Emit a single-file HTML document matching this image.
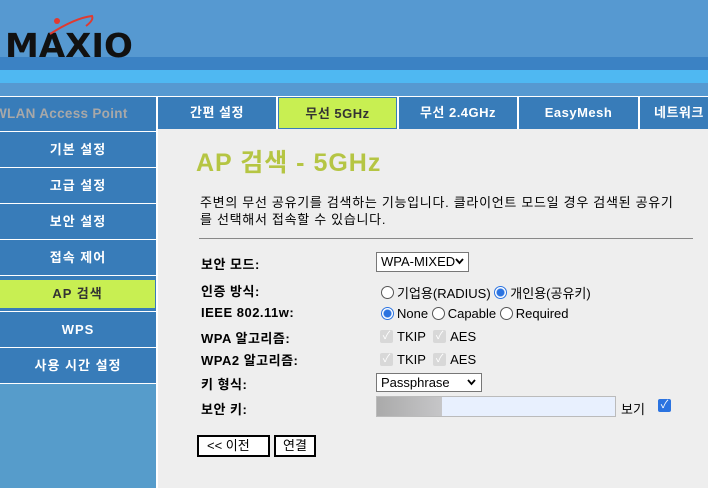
<!DOCTYPE html>
<html><head><meta charset="utf-8"><style>
*{margin:0;padding:0;box-sizing:border-box}
body{width:708px;height:488px;overflow:hidden;background:#eeeeee;font-family:"Liberation Sans","Noto Sans CJK KR",sans-serif;position:relative;font-size:13px;color:#000}
.a{position:absolute}
.tab{position:absolute;top:97px;height:32px;background:#387cb9;color:#fff;font-weight:bold;font-size:13px;text-align:center;line-height:32px;white-space:nowrap;overflow:hidden;letter-spacing:0.5px}
.nav{position:absolute;left:0;width:156px;height:35px;background:#387cb9;color:#fff;font-weight:bold;font-size:13px;text-align:center;line-height:35px;letter-spacing:1px}
.lbl{position:absolute;left:201px;font-weight:bold;font-size:13px;letter-spacing:0.5px}
.val{position:absolute;left:380px;font-size:13px;display:flex;align-items:center}
.rad{width:13px;height:13px;border:1px solid #555;border-radius:50%;display:inline-block;margin-right:3px;background:#fff}
.rad.on{border:1px solid #2b73e0;background:radial-gradient(circle,#2b73e0 3.5px,#fff 4.5px)}
.cb{width:13px;height:13px;background:#d8d8d8;border-radius:2px;display:inline-block;margin-right:4px;color:#fff;font-size:11px;line-height:13px;text-align:center}
</style></head><body>
<div class="a" style="left:0;top:0;width:708px;height:57px;background:#5699d1"></div>
<div class="a" style="left:0;top:57px;width:708px;height:13px;background:#3b82c4"></div>
<div class="a" style="left:0;top:70px;width:708px;height:13px;background:#4fb8f2"></div>
<div class="a" style="left:0;top:83px;width:708px;height:13px;background:#5699d1"></div>
<div class="a" style="left:5px;top:26px;font-size:33px;font-weight:bold;color:#111;letter-spacing:0px;font-family:'DejaVu Sans',sans-serif;transform:scaleX(1.03);transform-origin:left">MAXIO</div>
<svg class="a" style="left:0;top:10px" width="140" height="48"><path d="M50 24 Q75 8 92 6 Q94 10 86 16" stroke="#e03a30" stroke-width="2" fill="none"/><circle cx="57" cy="11" r="3" fill="#e03a30"/></svg>
<div class="a" style="left:0;top:96px;width:708px;height:1px;background:#fff"></div>
<div class="nav" style="top:97px;height:34px;color:#a8a8a8;text-align:left;line-height:34px;font-size:13.5px;left:-6px;width:162px;letter-spacing:0.3px">WLAN Access Point</div>
<div class="a" style="left:156px;top:96px;width:2px;height:392px;background:#fff"></div>
<div class="a" style="left:0;top:131px;width:156px;height:357px;background:#fff"></div>
<div class="nav" style="top:132px">기본 설정</div>
<div class="nav" style="top:168px">고급 설정</div>
<div class="nav" style="top:204px">보안 설정</div>
<div class="nav" style="top:240px">접속 제어</div>
<div class="nav" style="top:276px"></div>
<div class="a" style="left:0;top:280px;width:155px;height:28px;background:#c8ef52;color:#333;font-weight:bold;text-align:center;line-height:28px;letter-spacing:1px">AP 검색</div>
<div class="nav" style="top:312px">WPS</div>
<div class="nav" style="top:348px">사용 시간 설정</div>
<div class="a" style="left:0;top:384px;width:156px;height:104px;background:#569ccb"></div>
<div class="a" style="left:158px;top:97px;width:550px;height:32px;background:#fff"></div>
<div class="tab" style="left:158px;width:118px">간편 설정</div>
<div class="tab" style="left:278px;width:119px;background:#c8ef52;color:#333;border:1px solid #387cb9">무선 5GHz</div>
<div class="tab" style="left:399px;width:118px">무선 2.4GHz</div>
<div class="tab" style="left:519px;width:119px">EasyMesh</div>
<div class="tab" style="left:640px;width:68px;text-align:left;padding-left:14px">네트워크</div>
<div class="a" style="left:196px;top:143px;font-size:25px;font-weight:bold;color:#b5c543;letter-spacing:1px">AP 검색 - 5GHz</div>
<div class="a" style="left:200px;top:194px;width:500px;line-height:17px;font-size:13px;letter-spacing:0.7px;white-space:nowrap">주변의 무선 공유기를 검색하는 기능입니다. 클라이언트 모드일 경우 검색된 공유기<br>를 선택해서 접속할 수 있습니다.</div>
<div class="a" style="left:199px;top:238px;width:494px;height:1px;background:#888"></div>
<div class="lbl" style="top:254px">보안 모드:</div>
<div class="lbl" style="top:281px">인증 방식:</div>
<div class="lbl" style="top:305px">IEEE 802.11w:</div>
<div class="lbl" style="top:328px">WPA 알고리즘:</div>
<div class="lbl" style="top:350px">WPA2 알고리즘:</div>
<div class="lbl" style="top:374px">키 형식:</div>
<div class="lbl" style="top:399px">보안 키:</div>
<div class="a" style="left:376px;top:252px;width:93px;height:20px;border:1px solid #777;background:#fff;font-size:13px;line-height:18px;padding-left:4px">WPA-MIXED</div>
<svg class="a" style="left:455px;top:258px" width="9" height="7"><path d="M1 1 L4.5 5 L8 1" stroke="#000" stroke-width="1.8" fill="none"/></svg>
<div class="val" style="top:283px;left:381px"><span class="rad"></span>기업용(RADIUS)&nbsp;<span class="rad on"></span>개인용(공유키)</div>
<div class="val" style="top:306px;left:381px"><span class="rad on"></span>None&nbsp;<span class="rad"></span>Capable&nbsp;<span class="rad"></span>Required</div>
<div class="val" style="top:329px;left:380px"><span class="cb">✓</span>TKIP&nbsp;&nbsp;<span class="cb">✓</span>AES</div>
<div class="val" style="top:352px;left:380px"><span class="cb">✓</span>TKIP&nbsp;&nbsp;<span class="cb">✓</span>AES</div>
<div class="a" style="left:376px;top:373px;width:106px;height:19px;border:1px solid #777;background:#fff;font-size:13px;line-height:17px;padding-left:4px">Passphrase</div>
<svg class="a" style="left:467px;top:379px" width="9" height="7"><path d="M1 1 L4.5 5 L8 1" stroke="#000" stroke-width="1.8" fill="none"/></svg>
<div class="a" style="left:376px;top:396px;width:240px;height:21px;background:#e8f0fe;border:1px solid #bbb"></div>
<div class="a" style="left:377px;top:397px;width:65px;height:19px;background:linear-gradient(90deg,#aaa,#c6c6c8)"></div>
<div class="a" style="left:621px;top:399px">보기</div>
<div class="a" style="left:658px;top:399px;width:13px;height:13px;background:#2b73e0;border-radius:2px;color:#fff;font-size:11px;line-height:13px;text-align:center">✓</div>
<div class="a" style="left:197px;top:435px;width:73px;height:22px;border:2px solid #000;background:#fff;font-size:13px;line-height:18px;padding-left:8px">&lt;&lt; 이전</div>
<div class="a" style="left:274px;top:435px;width:42px;height:22px;border:2px solid #000;background:#fff;font-size:13px;line-height:18px;text-align:center">연결</div>
</body></html>
